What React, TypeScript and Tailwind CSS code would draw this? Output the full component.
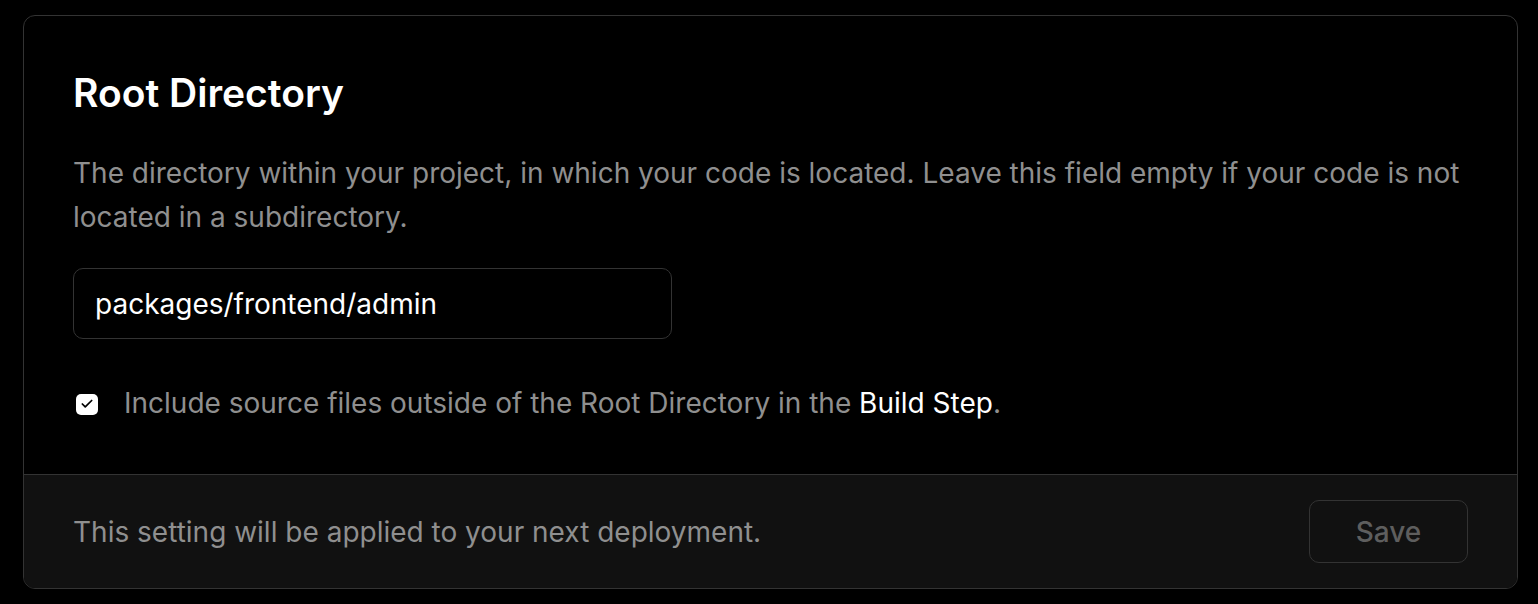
import { Check } from "lucide-react";

const App = () => {
  return (
    <div
      className="min-h-[604px] w-full bg-black pt-[15px] pl-[23px] pr-[20px]"
      style={{ fontFamily: "Inter, 'Noto Sans', sans-serif" }}
    >
      <div className="overflow-hidden rounded-[12px] border border-[#333333] bg-black">
        {/* Body */}
        <div className="px-[49px] pt-[53px] pb-[49px]">
          <h2 className="text-[39px] font-semibold leading-[48px] text-white">
            Root Directory
          </h2>
          <p className="mt-[34px] text-[28px] leading-[44px] text-[#8f8f8f]">
            The directory within your project, in which your code is located. Leave this field empty if your code is not
            located in a subdirectory.
          </p>
          <div className="mt-[29px] flex h-[71px] w-[599px] items-center rounded-[10px] border border-[#333333] bg-black px-[21px] text-[28px] text-white">
            packages/frontend/admin
          </div>
          <label className="mt-[42px] flex items-center gap-[26px] text-[28px] leading-[44px] text-[#8f8f8f]">
            <span className="ml-[3px] mt-[2px] flex h-[21px] w-[22px] items-center justify-center rounded-[5px] bg-white">
              <Check className="h-[14px] w-[14px] text-black" strokeWidth={3} />
            </span>
            <span>
              Include source files outside of the Root Directory in the{" "}
              <span className="text-white">Build Step</span>.
            </span>
          </label>
        </div>

        {/* Footer */}
        <div className="flex h-[114px] items-center justify-between border-t border-[#333333] bg-[#111111] pl-[49px] pr-[49px]">
          <p className="text-[28px] leading-[44px] text-[#8f8f8f]">
            This setting will be applied to your next deployment.
          </p>
          <button className="h-[63px] w-[159px] rounded-[10px] border border-[#333333] bg-[#111111] text-[28px] font-medium text-[#5e5e5e]">
            Save
          </button>
        </div>
      </div>
    </div>
  );
};

export default App;
